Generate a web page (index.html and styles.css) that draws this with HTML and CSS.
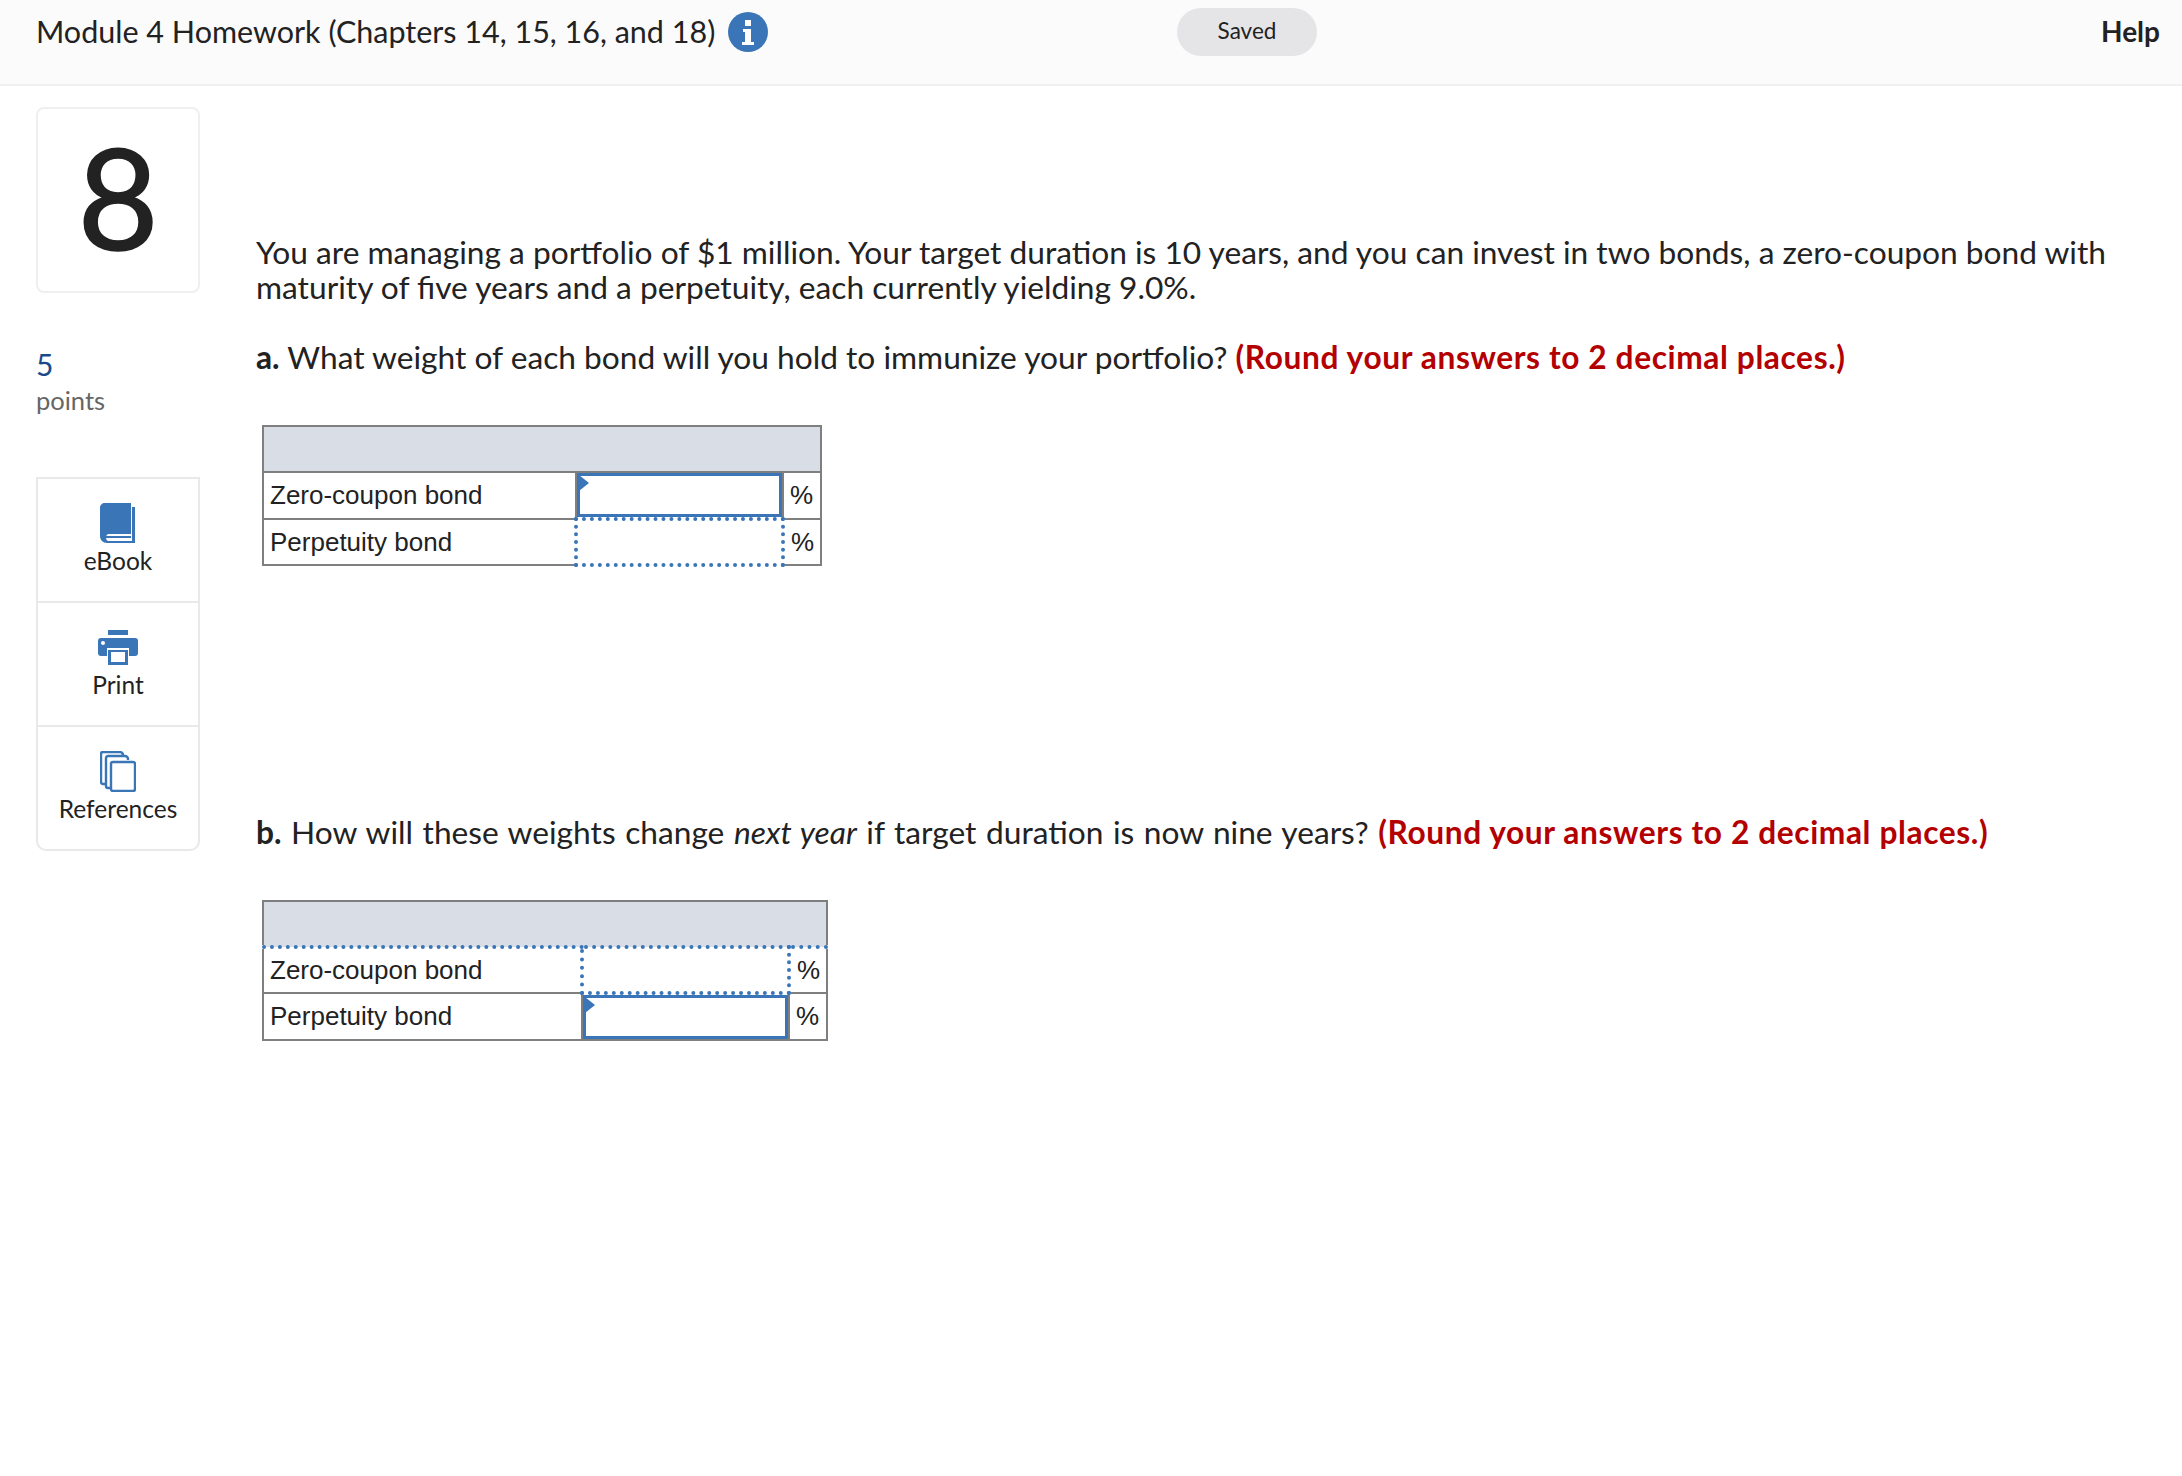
FILE: index.html
```html
<!DOCTYPE html>
<html lang="en">
<head>
    <meta charset="utf-8">
    <title>Module 4 Homework</title>
    <link rel="stylesheet" href="styles.css">
</head>
<body>
    <header class="topbar">
        <div class="title-wrap">
            <h1 class="title">Module 4 Homework (Chapters 14, 15, 16, and 18)</h1>
            <svg class="info-icon" viewBox="0 0 40 40" width="40" height="40">
                <circle cx="20" cy="20" r="20" fill="#3a75b8"/>
                <rect x="17" y="8" width="6" height="6" fill="#fff"/>
                <path d="M15 17h8v13h3v3H14v-3h3V20h-2z" fill="#fff"/>
            </svg>
        </div>
        <div class="saved">Saved</div>
        <div class="help">Help</div>
    </header>

    <div class="page">
        <aside class="sidebar">
            <div class="qnum">8</div>
            <div class="points">
                <div class="points-val">5</div>
                <div class="points-label">points</div>
            </div>
            <div class="tools">
                <div class="tool">
                    <svg class="tool-icon" viewBox="0 0 36 41" width="36" height="41">
                        <path d="M5 0h26v31H8a4 4 0 0 0 0 7h24V4h3v36H7c-4 0-7-3-7-7V5c0-3 2-5 5-5z" fill="#3a75b8"/>
                        <rect x="6" y="33" width="25" height="2" fill="#3a75b8"/>
                    </svg>
                    <span>eBook</span>
                </div>
                <div class="tool">
                    <svg class="tool-icon" viewBox="0 0 40 35" width="40" height="35">
                        <rect x="10" y="0" width="20" height="5" fill="#3a75b8"/>
                        <path d="M3 8h34a3 3 0 0 1 3 3v12a3 3 0 0 1-3 3h-6v-8H9v8H3a3 3 0 0 1-3-3V11a3 3 0 0 1 3-3z" fill="#3a75b8"/>
                        <circle cx="5" cy="13" r="2" fill="#fff"/>
                        <path d="M10 20h20v15H10zM13 22v10h14V22z" fill="#3a75b8" fill-rule="evenodd"/>
                    </svg>
                    <span>Print</span>
                </div>
                <div class="tool">
                    <svg class="tool-icon" viewBox="0 0 36 41" width="36" height="41" fill="none" stroke="#3a75b8" stroke-width="2.4">
                        <path d="M5 33H3a2 2 0 0 1-2-2V3a2 2 0 0 1 2-2h17a3 3 0 0 1 3 3v1"/>
                        <path d="M10 37H8a2 2 0 0 1-2-2V7a2 2 0 0 1 2-2h17a3 3 0 0 1 3 3v1"/>
                        <rect x="11" y="11" width="24" height="29" rx="2"/>
                    </svg>
                    <span>References</span>
                </div>
            </div>
        </aside>

        <main class="question">
            <p class="intro">You are managing a portfolio of $1 million. Your target duration is 10 years, and you can invest in two bonds, a zero-coupon bond with maturity of five years and a perpetuity, each currently yielding 9.0%.</p>

            <p class="part"><b>a.</b> What weight of each bond will you hold to immunize your portfolio? <b class="note">(Round your answers to 2 decimal places.)</b></p>

            <table class="answers answers-a">
                <colgroup><col class="c-label"><col class="c-input"><col class="c-unit"></colgroup>
                <tr class="head"><td colspan="3"></td></tr>
                <tr>
                    <td>Zero-coupon bond</td>
                    <td class="cell-input"><span class="marker"></span><input type="text"></td>
                    <td class="unit">%</td>
                </tr>
                <tr>
                    <td>Perpetuity bond</td>
                    <td class="cell-dotted"></td>
                    <td class="unit">%</td>
                </tr>
            </table>

            <p class="part part-b"><b>b.</b> How will these weights change <i>next year</i> if target duration is now nine years? <b class="note">(Round your answers to 2 decimal places.)</b></p>

            <table class="answers answers-b">
                <colgroup><col class="c-label"><col class="c-input"><col class="c-unit"></colgroup>
                <tr class="head"><td colspan="3"></td></tr>
                <tr class="row-dotted">
                    <td>Zero-coupon bond</td>
                    <td class="cell-dotted"></td>
                    <td class="unit">%</td>
                </tr>
                <tr>
                    <td>Perpetuity bond</td>
                    <td class="cell-input"><span class="marker"></span><input type="text"></td>
                    <td class="unit">%</td>
                </tr>
            </table>
        </main>
    </div>
</body>
</html>
```

FILE: styles.css
```css
* {
    box-sizing: border-box;
}
body {
    margin: 0;
    font-family: Lato, "Open Sans", sans-serif;
    color: #222;
    background-color: #fff;
}

/* top bar */
.topbar {
    position: relative;
    display: flex;
    justify-content: space-between;
    height: 86px;
    padding: 8px 22px 0 36px;
    background-color: #fbfbfb;
    border-bottom: 2px solid #f0f0f0;
}
.title-wrap {
    display: flex;
    align-items: flex-start;
    gap: 13px;
}
.title {
    margin: 0;
    font-size: 30.5px;
    font-weight: 400;
    line-height: 47px;
}
.info-icon {
    margin-top: 4px;
}
.saved {
    position: absolute;
    left: 1177px;
    top: 8px;
    width: 140px;
    height: 48px;
    border-radius: 24px;
    background-color: #e5e4e6;
    font-size: 22.5px;
    line-height: 46px;
    text-align: center;
}
.help {
    font-size: 28px;
    font-weight: 700;
    line-height: 47px;
}

/* left column */
.page {
    display: flex;
    padding: 21px 36px 0;
}
.sidebar {
    flex: 0 0 164px;
}
.qnum {
    height: 186px;
    border: 2px solid #efefef;
    border-radius: 8px;
    font-size: 140px;
    font-weight: 400;
    line-height: 174px;
    text-align: center;
    -webkit-text-stroke: 1.5px #222;
}
.points {
    margin-top: 53px;
}
.points-val {
    font-size: 30px;
    line-height: 36px;
    color: #1a4a8a;
}
.points-label {
    font-size: 25.5px;
    line-height: 36px;
    color: #666;
}
.tools {
    margin-top: 59px;
    border: 2px solid #e9e9e9;
    border-radius: 0 0 10px 10px;
}
.tool {
    display: flex;
    flex-direction: column;
    align-items: center;
    height: 124px;
    padding-top: 24px;
    font-size: 24.5px;
    border-bottom: 2px solid #e9e9e9;
}
.tool:last-child {
    border-bottom: 0;
    height: 122px;
}
.tool span {
    margin-top: 2px;
    line-height: 30px;
}
.tool-icon {
    height: 41px;
}

/* question */
.question {
    margin-left: 56px;
    padding-top: 128px;
}
.intro, .part {
    margin: 0;
    font-size: 31.7px;
    line-height: 35px;
}
.part {
    margin-top: 35px;
}
.part-b {
    margin-top: 248px;
    word-spacing: 1.4px;
}
.note {
    color: #b30000;
    letter-spacing: 0.6px;
    word-spacing: 0;
}

/* answer tables */
.answers {
    margin: 50px 0 0 6px;
    border-collapse: collapse;
    table-layout: fixed;
    border: 2px solid #7f7f7f;
    font-family: "Liberation Sans", Arial, sans-serif;
    font-size: 26px;
}
.answers td {
    height: 46px;
    padding: 0 0 0 6px;
    border: 2px solid #7f7f7f;
}
.answers .head td {
    height: 46px;
    background-color: #d9dde5;
}
.answers-a {
    width: 560px;
}
.answers-b {
    width: 566px;
}
.answers-a .c-label { width: 313px; }
.answers-a .c-input { width: 207px; }
.answers-b .c-label { width: 319px; }
.answers-b .c-input { width: 207px; }

.answers .unit {
    padding-left: 6px;
}
.answers .cell-input {
    position: relative;
    padding: 0;
}
.cell-input input {
    display: block;
    width: 100%;
    height: 44px;
    border: 3px solid #3a75b8;
    background-color: #fff;
    outline: none;
}
.marker {
    position: absolute;
    left: 2px;
    top: 2px;
    width: 0;
    height: 0;
    border-left: 10px solid #3a75b8;
    border-top: 8px solid transparent;
    border-bottom: 8px solid transparent;
}
.answers .cell-dotted {
    border: 4px dotted #3a75b8;
}
.answers .row-dotted td {
    border-top: 4px dotted #3a75b8;
}
```
